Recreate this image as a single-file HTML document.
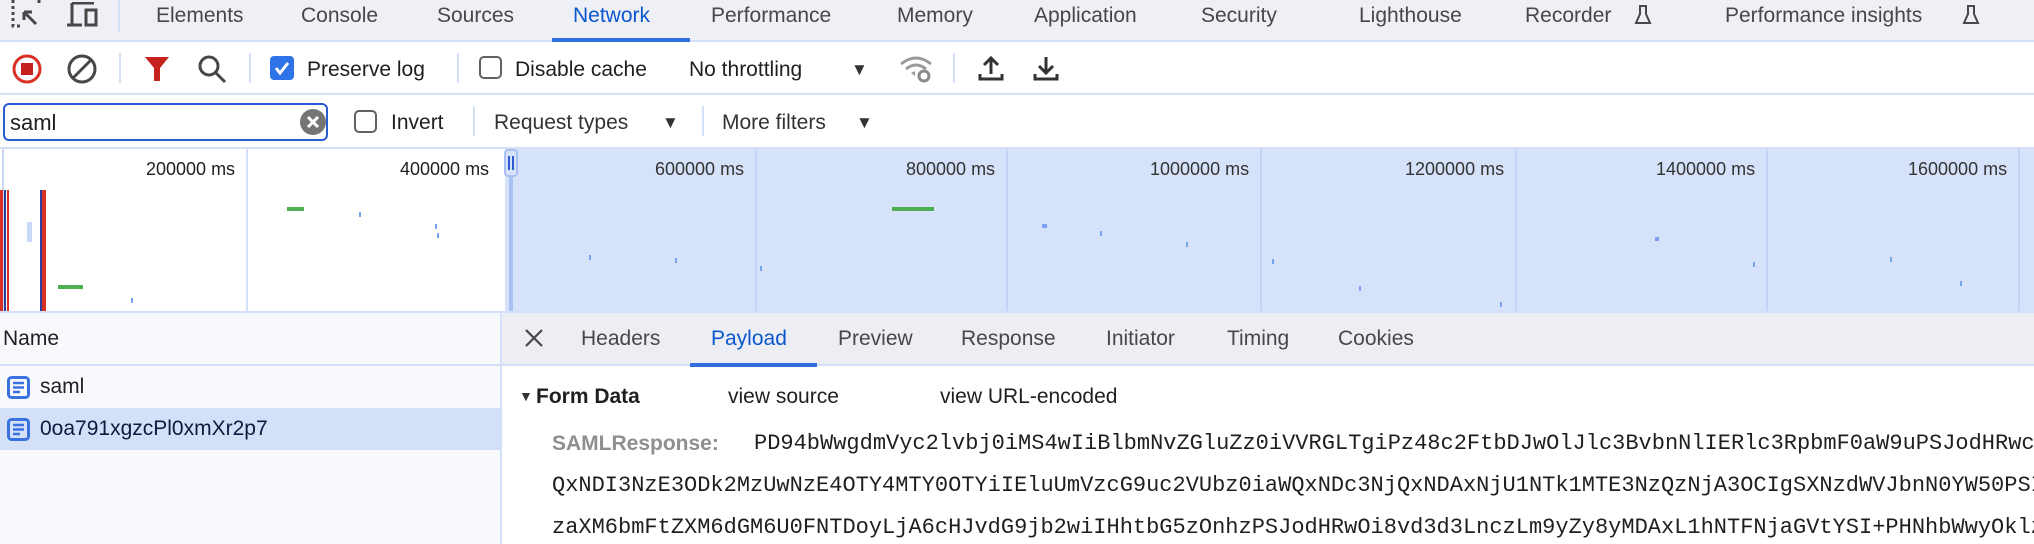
<!DOCTYPE html>
<html><head><meta charset="utf-8"><style>
*{margin:0;padding:0;box-sizing:border-box}
body{width:2034px;height:544px;overflow:hidden;background:#fff;font-family:"Liberation Sans",Arial,sans-serif;color:#1f1f1f;position:relative}
.a{position:absolute;white-space:nowrap}
.tab{position:absolute;top:3px;height:37px;line-height:26px;font-size:21px;color:#474747}
.t2{font-size:21px;color:#1f1f1f}
.sep{position:absolute;width:2px;background:#d3e0f8}
.hl{position:absolute;left:0;width:2034px;height:2px;background:#d3e0f8}
.mono{font-family:"Liberation Mono","DejaVu Sans Mono",monospace;font-size:22px;color:#1f1f1f;overflow:hidden}
.dt{position:absolute;top:311px;height:56px;line-height:54px;font-size:21px;color:#474747}
.cb{position:absolute;width:23px;height:23px;border:2px solid #5f6368;border-radius:5px;background:#fff}
.mk{position:absolute;background:#7aa2f0}
</style></head><body>
<!-- top tab bar -->
<div class="a" style="left:0;top:0;width:2034px;height:40px;background:#eef0f5"></div>
<div class="hl" style="top:40px"></div>
<svg class="a" style="left:10px;top:0" width="34" height="30" viewBox="0 0 34 30"><path d="M3 0v26h8M3 0h0M29 0v6" stroke="#474747" stroke-width="3" stroke-dasharray="3 3" fill="none"/><path d="M14 12l12 12M14 12h8M14 12v8" stroke="#474747" stroke-width="3" fill="none"/></svg>
<svg class="a" style="left:64px;top:2px" width="36" height="26" viewBox="0 0 36 26"><path d="M8 1v21M3 23h15" stroke="#474747" stroke-width="3" fill="none"/><path d="M8 1h22" stroke="#474747" stroke-width="3"/><rect x="22" y="8" width="10" height="15" stroke="#474747" stroke-width="3" fill="none"/></svg>
<div class="sep" style="left:118px;top:0;height:32px"></div>
<div class="tab" style="left:156px">Elements</div>
<div class="tab" style="left:301px">Console</div>
<div class="tab" style="left:437px">Sources</div>
<div class="tab" style="left:573px;color:#0b57d0">Network</div>
<div class="a" style="left:552px;top:38px;width:138px;height:4px;background:#2f6fde"></div>
<div class="tab" style="left:711px">Performance</div>
<div class="tab" style="left:897px">Memory</div>
<div class="tab" style="left:1034px">Application</div>
<div class="tab" style="left:1201px">Security</div>
<div class="tab" style="left:1359px">Lighthouse</div>
<div class="tab" style="left:1525px">Recorder</div>
<svg class="a" style="left:1634px;top:4px" width="18" height="22" viewBox="0 0 18 22"><path d="M5 2h8M6 2v8L2 19h14L12 10V2" stroke="#474747" stroke-width="2" fill="none"/></svg>
<div class="tab" style="left:1725px">Performance insights</div>
<div class="a" style="left:1962px;top:4px"><svg width="18" height="22" viewBox="0 0 18 22"><path d="M5 2h8M6 2v8L2 19h14L12 10V2" stroke="#474747" stroke-width="2" fill="none"/></svg></div>

<!-- row 2 -->
<div class="hl" style="top:93px"></div>
<svg class="a" style="left:11px;top:53px" width="32" height="32"><circle cx="16" cy="16" r="13" stroke="#d93025" stroke-width="3" fill="none"/><rect x="10" y="10" width="12" height="12" fill="#c5221f"/></svg>
<svg class="a" style="left:66px;top:53px" width="32" height="32"><circle cx="16" cy="16" r="13" stroke="#474747" stroke-width="3" fill="none"/><path d="M7 25L25 7" stroke="#474747" stroke-width="3"/></svg>
<div class="sep" style="left:119px;top:53px;height:30px"></div>
<svg class="a" style="left:144px;top:55px" width="26" height="28"><path d="M1 2h24L16 13v13h-6V13z" fill="#c5221f"/></svg>
<svg class="a" style="left:197px;top:54px" width="32" height="32"><circle cx="12" cy="12" r="9" stroke="#474747" stroke-width="3" fill="none"/><path d="M18 18l10 10" stroke="#474747" stroke-width="3"/></svg>
<div class="sep" style="left:249px;top:53px;height:30px"></div>
<div class="a" style="left:270px;top:56px;width:24px;height:24px;border-radius:4px;background:#2f73e8"></div>
<svg class="a" style="left:270px;top:56px" width="24" height="24"><path d="M6 12l4 5 8-10" stroke="#fff" stroke-width="3" fill="none"/></svg>
<div class="a t2" style="left:307px;top:58px">Preserve log</div>
<div class="sep" style="left:457px;top:53px;height:30px"></div>
<div class="cb" style="left:479px;top:56px"></div>
<div class="a t2" style="left:515px;top:58px">Disable cache</div>
<div class="a t2" style="left:689px;top:58px">No throttling</div>
<div class="a" style="left:851px;top:60px;font-size:17px;color:#333">▼</div>
<svg class="a" style="left:899px;top:54px" width="36" height="30" viewBox="0 0 36 30"><path d="M2 10Q17 -2 32 10M7 15Q17 7 27 15" stroke="#9a9a9a" stroke-width="3" fill="none"/><path d="M12 19l4-2v5z" fill="#9a9a9a"/><circle cx="25" cy="22" r="5" stroke="#8a8a8a" stroke-width="3" fill="none"/></svg>
<div class="sep" style="left:953px;top:53px;height:30px"></div>
<svg class="a" style="left:977px;top:54px" width="28" height="28"><path d="M14 20V4M7 11l7-7 7 7M3 20v5h22v-5" stroke="#333" stroke-width="3" fill="none"/></svg>
<svg class="a" style="left:1032px;top:54px" width="28" height="28"><path d="M14 3v16M7 12l7 7 7-7M3 20v5h22v-5" stroke="#333" stroke-width="3" fill="none"/></svg>

<!-- row 3 -->
<div class="hl" style="top:147px"></div>
<div class="a" style="left:3px;top:103px;width:325px;height:38px;border:2px solid #2a5bd0;border-radius:6px"></div>
<div class="a t2" style="left:10px;top:110px;font-size:22px">saml</div>
<svg class="a" style="left:299px;top:108px" width="28" height="28"><circle cx="14" cy="14" r="13" fill="#757575"/><path d="M9 9l10 10M19 9L9 19" stroke="#fff" stroke-width="3"/></svg>
<div class="cb" style="left:354px;top:110px"></div>
<div class="a t2" style="left:391px;top:111px">Invert</div>
<div class="sep" style="left:473px;top:106px;height:30px"></div>
<div class="a t2" style="left:494px;top:111px;color:#333">Request types</div>
<div class="a" style="left:662px;top:113px;font-size:17px;color:#333">▼</div>
<div class="sep" style="left:702px;top:106px;height:30px"></div>
<div class="a t2" style="left:722px;top:111px;color:#333">More filters</div>
<div class="a" style="left:856px;top:113px;font-size:17px;color:#333">▼</div>

<!-- timeline -->
<div class="a" style="left:505px;top:149px;width:1529px;height:162px;background:#d6e2fa"></div>
<div class="sep" style="left:2px;top:149px;height:162px;background:#c8d7f5"></div>
<div class="sep" style="left:246px;top:149px;height:162px"></div>
<div class="sep" style="left:755px;top:149px;height:162px;background:#c3d3f3"></div>
<div class="sep" style="left:1006px;top:149px;height:162px;background:#c3d3f3"></div>
<div class="sep" style="left:1260px;top:149px;height:162px;background:#c3d3f3"></div>
<div class="sep" style="left:1515px;top:149px;height:162px;background:#c3d3f3"></div>
<div class="sep" style="left:1766px;top:149px;height:162px;background:#c3d3f3"></div>
<div class="sep" style="left:2018px;top:149px;height:162px;background:#c3d3f3"></div>
<div class="a" style="left:504px;top:149px;width:14px;height:28px;border:2px solid #a9c1f2;border-radius:4px;background:#d6e2fa"></div>
<div class="a" style="left:508px;top:156px;width:2px;height:14px;background:#2a5bd0"></div>
<div class="a" style="left:512px;top:156px;width:2px;height:14px;background:#2a5bd0"></div>
<div class="a" style="left:509px;top:177px;width:4px;height:134px;background:#a9c1f2"></div>
<div class="a" style="font-size:18px;color:#1f1f1f;top:159px;left:146px">200000 ms</div>
<div class="a" style="font-size:18px;color:#1f1f1f;top:159px;left:400px">400000 ms</div>
<div class="a" style="font-size:18px;color:#333;top:159px;left:655px">600000 ms</div>
<div class="a" style="font-size:18px;color:#333;top:159px;left:906px">800000 ms</div>
<div class="a" style="font-size:18px;color:#333;top:159px;left:1150px">1000000 ms</div>
<div class="a" style="font-size:18px;color:#333;top:159px;left:1405px">1200000 ms</div>
<div class="a" style="font-size:18px;color:#333;top:159px;left:1656px">1400000 ms</div>
<div class="a" style="font-size:18px;color:#333;top:159px;left:1908px">1600000 ms</div>
<div class="a" style="left:0;top:190px;width:3px;height:121px;background:#d93025"></div>
<div class="a" style="left:4px;top:190px;width:2px;height:121px;background:#2a3f9f"></div>
<div class="a" style="left:7px;top:190px;width:2px;height:121px;background:#d93025"></div>
<div class="a" style="left:40px;top:190px;width:2px;height:121px;background:#2a3f9f"></div>
<div class="a" style="left:42px;top:190px;width:4px;height:121px;background:#d93025"></div>
<div class="a" style="left:27px;top:222px;width:5px;height:20px;background:#c8d7f5"></div>
<div class="a" style="left:58px;top:285px;width:25px;height:4px;background:#4caf50"></div>
<div class="a" style="left:287px;top:207px;width:17px;height:4px;background:#4caf50"></div>
<div class="a" style="left:892px;top:207px;width:42px;height:4px;background:#4caf50"></div>
<div class="mk" style="left:359px;top:212px;width:2px;height:5px"></div>
<div class="mk" style="left:435px;top:224px;width:2px;height:5px"></div>
<div class="mk" style="left:437px;top:233px;width:2px;height:5px"></div>
<div class="mk" style="left:131px;top:298px;width:2px;height:5px"></div>
<div class="mk" style="left:589px;top:255px;width:2px;height:5px"></div>
<div class="mk" style="left:675px;top:258px;width:2px;height:5px"></div>
<div class="mk" style="left:760px;top:266px;width:2px;height:5px"></div>
<div class="mk" style="left:1042px;top:224px;width:5px;height:4px"></div>
<div class="mk" style="left:1100px;top:231px;width:2px;height:5px"></div>
<div class="mk" style="left:1186px;top:242px;width:2px;height:5px"></div>
<div class="mk" style="left:1272px;top:259px;width:2px;height:5px"></div>
<div class="mk" style="left:1359px;top:286px;width:2px;height:5px"></div>
<div class="mk" style="left:1500px;top:302px;width:2px;height:5px"></div>
<div class="mk" style="left:1655px;top:237px;width:4px;height:4px"></div>
<div class="mk" style="left:1753px;top:262px;width:2px;height:5px"></div>
<div class="mk" style="left:1890px;top:257px;width:2px;height:5px"></div>
<div class="mk" style="left:1960px;top:281px;width:2px;height:5px"></div>

<!-- bottom -->
<div class="a" style="left:0;top:311px;width:500px;height:233px;background:#f8f9fd"></div>
<div class="a" style="left:0;top:311px;width:2034px;height:2px;background:#d3e0f8"></div>
<div class="a" style="left:502px;top:313px;width:1532px;height:53px;background:#eceef3"></div>
<div class="hl" style="top:364px"></div>
<div class="sep" style="left:500px;top:311px;height:233px"></div>
<div class="a" style="left:3px;top:327px;font-size:21px">Name</div>
<div class="a" style="left:0;top:408px;width:500px;height:42px;background:#d3e0f8"></div>
<svg class="a" style="left:7px;top:376px" width="23" height="23"><rect x="1.5" y="1.5" width="20" height="20" rx="3" stroke="#3a73e0" stroke-width="3" fill="none"/><path d="M6 7h11M6 11.5h11M6 16h7" stroke="#3a73e0" stroke-width="2.5"/></svg>
<div class="a" style="left:40px;top:375px;font-size:21px">saml</div>
<svg class="a" style="left:7px;top:418px" width="23" height="23"><rect x="1.5" y="1.5" width="20" height="20" rx="3" stroke="#3a73e0" stroke-width="3" fill="none"/><path d="M6 7h11M6 11.5h11M6 16h7" stroke="#3a73e0" stroke-width="2.5"/></svg>
<div class="a" style="left:40px;top:417px;font-size:21px;color:#0d1b3e">0oa791xgzcPl0xmXr2p7</div>

<svg class="a" style="left:524px;top:328px" width="20" height="20"><path d="M2 2l16 16M18 2L2 18" stroke="#474747" stroke-width="2.2"/></svg>
<div class="dt" style="left:581px;top:312px">Headers</div>
<div class="dt" style="left:711px;top:312px;color:#0b57d0">Payload</div>
<div class="a" style="left:690px;top:363px;width:127px;height:4px;background:#2f6fde"></div>
<div class="dt" style="left:838px;top:312px">Preview</div>
<div class="dt" style="left:961px;top:312px">Response</div>
<div class="dt" style="left:1106px;top:312px">Initiator</div>
<div class="dt" style="left:1227px;top:312px">Timing</div>
<div class="dt" style="left:1338px;top:312px">Cookies</div>

<div class="a" style="left:519px;top:388px;font-size:14px;color:#333">▼</div>
<div class="a" style="left:536px;top:385px;font-size:21px;font-weight:bold">Form Data</div>
<div class="a" style="left:728px;top:385px;font-size:21px">view source</div>
<div class="a" style="left:940px;top:385px;font-size:21px">view URL-encoded</div>
<div class="a" style="left:552px;top:432px;font-size:21px;font-weight:bold;color:#8f8f8f">SAMLResponse:</div>
<div class="a mono" style="left:754px;top:431px;width:1280px">PD94bWwgdmVyc2lvbj0iMS4wIiBlbmNvZGluZz0iVVRGLTgiPz48c2FtbDJwOlJlc3BvbnNlIERlc3RpbmF0aW9uPSJodHRwczovL2V4YW1wbGU</div>
<div class="a mono" style="left:552px;top:473px;width:1482px">QxNDI3NzE3ODk2MzUwNzE4OTY4MTY0OTYiIEluUmVzcG9uc2VUbz0iaWQxNDc3NjQxNDAxNjU1NTk1MTE3NzQzNjA3OCIgSXNzdWVJbnN0YW50PSIyMDI0</div>
<div class="a mono" style="left:552px;top:515px;width:1482px">zaXM6bmFtZXM6dGM6U0FNTDoyLjA6cHJvdG9jb2wiIHhtbG5zOnhzPSJodHRwOi8vd3d3LnczLm9yZy8yMDAxL1hNTFNjaGVtYSI+PHNhbWwyOklzc3Vl</div>
</body></html>
